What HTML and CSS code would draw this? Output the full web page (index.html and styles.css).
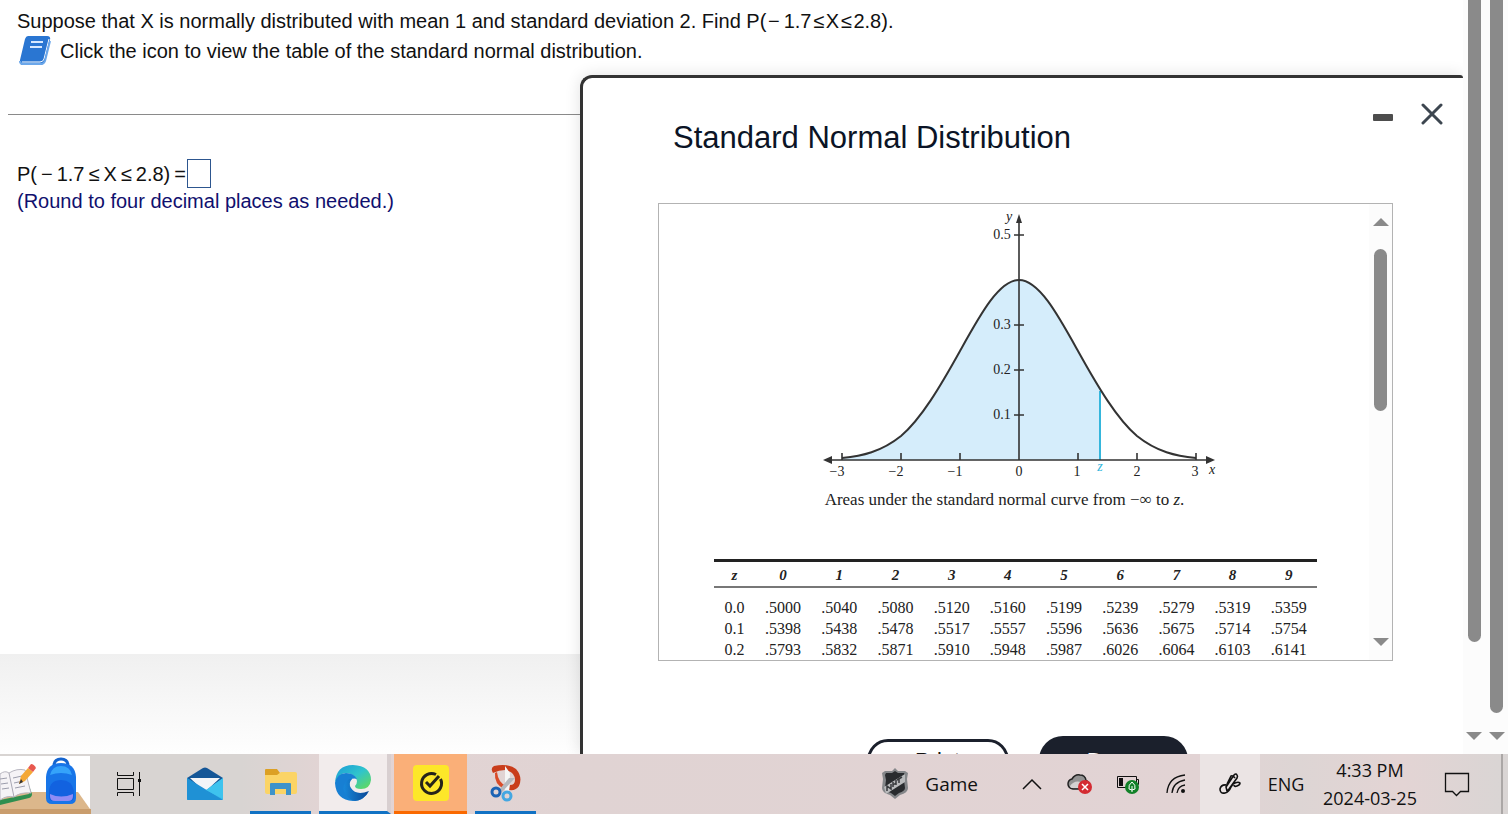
FILE: index.html
```html
<!DOCTYPE html>
<html lang="en">
<head>
    <meta charset="UTF-8">
    <meta name="viewport" content="width=device-width, initial-scale=1.0">
    <title>Standard Normal Distribution</title>
    <link rel="stylesheet" href="styles.css">
</head>
<body>
    <div class="screen">
        <main class="page">
            <section class="question">
                <p>Suppose that X is normally distributed with mean 1 and standard deviation 2. Find P(&hairsp;&minus;&thinsp;1.7&hairsp;≤&hairsp;X&hairsp;≤&hairsp;2.8).</p>
                <a class="table-link" href="#table">
                    <svg width="32" height="32" viewBox="0 0 32 32">
                        <path d="M9 1h19q4 0 3 4l-5 21q-1 4-5 4H4q-4 0-3-5L6 4q1-3 3-3z" fill="#2a76d2"/>
                        <path d="M30 4l-5 20q-1 3-4 3H3" fill="none" stroke="#fff" stroke-width="1"/>
                        <path d="M31 6l-5 20q-1 3-4 3H4q-3 0-3-3" fill="none" stroke="#6ba7ea" stroke-width="2"/>
                        <path d="M12 7h12M11 12h12" stroke="#d7e9ff" stroke-width="2"/>
                    </svg>
                    <span>Click the icon to view the table of the standard normal distribution.</span>
                </a>
            </section>
            <section class="answer">
                <div class="equation">
                    <label for="answer">P(&thinsp;&minus;&thinsp;1.7&thinsp;≤&thinsp;X&thinsp;≤&thinsp;2.8)&thinsp;=</label>
                    <input type="text" id="answer">
                </div>
                <p class="hint">(Round to four decimal places as needed.)</p>
            </section>
            <div class="page-footer"></div>

            <div class="dialog" id="table">
                <header class="dialog-header">
                    <h1>Standard Normal Distribution</h1>
                    <div class="window-buttons">
                        <button class="minimize" aria-label="Minimize"></button>
                        <button class="close" aria-label="Close">
                            <svg width="22" height="22" viewBox="0 0 22 22"><path d="M2 2l18 18M20 2L2 20" stroke="#3d4650" stroke-width="3" stroke-linecap="round"/></svg>
                        </button>
                    </div>
                </header>
                <div class="viewer">
                    <div class="viewer-content">
                        <svg class="chart" width="400" height="274" viewBox="-199 -250 400 274">
                            <clipPath id="area"><rect x="-180" y="-200" width="261" height="200"/></clipPath>
                            <path clip-path="url(#area)" fill="#d5edfb" d="M-177 0V-2C-157-4-138-8-118-24C-98-41-79-73-59-109C-39-145-20-180 0-180C20-180 39-145 59-109C79-73 98-41 118-24C138-8 157-4 177-2V0z"/>
                            <path d="M81 0V-69" stroke="#35b6dc" stroke-width="2"/>
                            <g fill="none" stroke="#333" stroke-width="1.6">
                                <path stroke-width="2" d="M-177-2C-157-4-138-8-118-24C-98-41-79-73-59-109C-39-145-20-180 0-180C20-180 39-145 59-109C79-73 98-41 118-24C138-8 157-4 177-2"/>
                                <path d="M-190 0H190M0 0V-242"/>
                                <path d="M-177 0v-7M-118 0v-7M-59 0v-7M59 0v-7M118 0v-7M177 0v-7"/>
                                <path d="M-5-45H5M-5-90H5M-5-135H5M-5-225H5"/>
                            </g>
                            <path fill="#333" d="M-196 0l9-4v8zM196 0l-9-4v8zM0-246l-3 9h6z"/>
                            <g class="labels">
                                <text x="-10" y="-239" font-style="italic">y</text>
                                <text x="-17" y="-221">0.5</text>
                                <text x="-17" y="-131">0.3</text>
                                <text x="-17" y="-86">0.2</text>
                                <text x="-17" y="-41">0.1</text>
                                <text x="-182" y="16">−3</text>
                                <text x="-123" y="16">−2</text>
                                <text x="-64" y="16">−1</text>
                                <text x="0" y="16">0</text>
                                <text x="58" y="16">1</text>
                                <text class="z" x="81" y="11">z</text>
                                <text x="118" y="16">2</text>
                                <text x="176" y="16">3</text>
                                <text x="193" y="14" font-style="italic">x</text>
                            </g>
                        </svg>
                        <p class="caption">Areas under the standard normal curve from −∞ to <i>z</i>.</p>
                        <table>
                            <thead>
                                <tr><th class="z-col">z</th><th>0</th><th>1</th><th>2</th><th>3</th><th>4</th><th>5</th><th>6</th><th>7</th><th>8</th><th>9</th></tr>
                            </thead>
                            <tbody>
                                <tr><td>0.0</td><td>.5000</td><td>.5040</td><td>.5080</td><td>.5120</td><td>.5160</td><td>.5199</td><td>.5239</td><td>.5279</td><td>.5319</td><td>.5359</td></tr>
                                <tr><td>0.1</td><td>.5398</td><td>.5438</td><td>.5478</td><td>.5517</td><td>.5557</td><td>.5596</td><td>.5636</td><td>.5675</td><td>.5714</td><td>.5754</td></tr>
                                <tr><td>0.2</td><td>.5793</td><td>.5832</td><td>.5871</td><td>.5910</td><td>.5948</td><td>.5987</td><td>.6026</td><td>.6064</td><td>.6103</td><td>.6141</td></tr>
                            </tbody>
                        </table>
                    </div>
                    <div class="scrollbar viewer-scroll">
                        <span class="arrow up"></span>
                        <span class="thumb"></span>
                        <span class="arrow"></span>
                    </div>
                </div>
                <div class="dialog-buttons">
                    <button class="print">Print</button>
                    <button class="done">Done</button>
                </div>
            </div>
        </main>
        <div class="scrollbar scroll-inner"><span class="thumb"></span><span class="arrow"></span></div>
        <div class="scrollbar scroll-outer"><span class="thumb"></span><span class="arrow"></span></div>
    </div>

    <footer class="taskbar">
        <button class="widget" aria-label="Search highlights">
            <svg width="91" height="60" viewBox="0 0 91 60">
                <rect width="91" height="60" fill="#d8d4d2"/>
                <rect y="2" width="90" height="58" fill="#fff"/>
                <path d="M0 38h78l12 17v5H0z" fill="#dcb78b"/>
                <path d="M0 55h91v5H0z" fill="#c99d6d"/>
                <path d="M0 46l29-6-2-14 5 14q0 3-3 4L0 51z" fill="#2f8f50"/>
                <path d="M0 20q5-4 9-1 8-5 16-3l6 23q-11-1-17 4-7-2-14 3z" fill="#f5f3f6" stroke="#b8b6c0"/>
                <path d="M9 19l5 24" stroke="#a9a8b4"/>
                <path d="M0 25l7-1M1 30l7-1M2 35l7-1M13 24l9-2M14 29l9-2M15 34l10-2" stroke="#9c9dac"/>
                <path d="M19 30l2-8 7-8 5 4-8 9z" fill="#f4a837"/>
                <path d="M28 14l3-4q3 0 5 4l-3 4z" fill="#e8584f"/>
                <path d="M19 30l2-5 2 3z" fill="#333"/>
                <path d="M54 12q0-7 7-7t7 7" fill="none" stroke="#1464cf" stroke-width="3"/>
                <path d="M46 23q1-14 15-14t15 14v21q0 6-6 6H52q-6 0-6-6z" fill="#1875e8"/>
                <path d="M50 21q2-9 11-9t11 9q-11-4-22 0z" fill="#35a3fa"/>
                <path d="M49 37q1-11 12-11t13 11v6q0 4-4 4H53q-4 0-4-4z" fill="#1262e0"/>
                <path d="M50 40q11 5 23 0v2q0 5-5 5H55q-5 0-5-5z" fill="#8f8cf5"/>
            </svg>
        </button>
        <button class="task-view" aria-label="Task view">
            <svg width="26" height="26" viewBox="0 0 26 26" fill="none" stroke="#111">
                <path d="M1.500 1v3.500h16V1M1.500 7.500h16v11h-16zM1.500 25v-3.500h16V25M23.500 1v24"/>
                <rect x="22" y="8" width="3" height="3" fill="#111" stroke="none"/>
            </svg>
        </button>
        <button class="mail" aria-label="Mail">
            <svg width="38" height="34" viewBox="0 0 38 34">
                <path d="M1 11L17 1q2-1 4 0l16 10v12H1z" fill="#145697"/>
                <path d="M4 11h30L19 25z" fill="#f3f5f8"/>
                <path d="M1 11l18 13 18-13v21q0 1-1 1H2q-1 0-1-1z" fill="#36b4e8"/>
                <path d="M1 11l36 22H2q-1 0-1-1z" fill="#1f91d5"/>
                <path d="M37 11v21L20 23z" fill="#3ec3ee"/>
            </svg>
        </button>
        <button class="folder running" aria-label="File Explorer">
            <svg width="34" height="30" viewBox="0 0 34 30">
                <path d="M1 2q0-1 1-1h11l3 4v5H1z" fill="#dca024"/>
                <path d="M1 7h12l4-3h14q2 0 2 2v18q0 2-2 2H3q-2 0-2-2z" fill="#fbd466"/>
                <path d="M6 27V16q0-1 1-1h19q1 0 1 1v11h-5v-6H11v6z" fill="#3e93ca"/>
            </svg>
        </button>
        <button class="edge running" aria-label="Microsoft Edge">
            <svg width="38" height="38" viewBox="0 0 38 38">
                <defs>
                    <linearGradient id="edge-top" x1="0" x2="1" y1="0" y2="1"><stop offset="0" stop-color="#1a9bd8"/><stop offset=".5" stop-color="#30c4cc"/><stop offset="1" stop-color="#67dc51"/></linearGradient>
                    <linearGradient id="edge-low" x1="0" x2="1"><stop offset="0" stop-color="#1787d9"/><stop offset="1" stop-color="#0b4795"/></linearGradient>
                </defs>
                <path d="M1 19Q2 1 19 1q18 1 18 15-1 9-10 9-6 0-6-3 2-2 2-5Q21 9 11 9 4 10 1 19z" fill="url(#edge-top)"/>
                <path d="M1 19Q3 9 12 9q8 0 11 6-7-2-8 5 0 12 13 11 5-1 7-4-5 10-16 10Q2 36 1 19z" fill="#177fd3"/>
                <path d="M15 15q-7 5-5 12 3 8 11 10 9-1 14-10-13 5-18-3-3-5 1-9z" fill="url(#edge-low)"/>
            </svg>
        </button>
        <button class="norton" aria-label="Norton">
            <svg width="36" height="36" viewBox="0 0 36 36">
                <rect width="36" height="36" rx="4" fill="#fde729"/>
                <path d="M27.500 14A10 10 0 1 1 23 9.500" fill="none" stroke="#25231a" stroke-width="3"/>
                <path d="M13 17l4 4 9-10" fill="none" stroke="#25231a" stroke-width="3"/>
            </svg>
        </button>
        <button class="snip running" aria-label="Snipping Tool">
            <svg width="32" height="38" viewBox="0 0 32 38">
                <path d="M3 9Q0 4 4 2q14-3 22 3 7 8 3 17-3 5-10 4l1-5q5 0 5-5 0-8-10-10-6 0-12 3z" fill="#c93d1b"/>
                <path d="M5 9q-1 11 9 16l2-3Q8 18 7 8z" fill="#d94b28"/>
                <path d="M15 2l5 7-1 19-4-2z" fill="#f5f5f5"/>
                <path d="M25 14L12 28l-3-2 10-12z" fill="#b5b8bd"/>
                <circle cx="6" cy="28" r="4" fill="none" stroke="#1c63b4" stroke-width="3"/>
                <circle cx="17" cy="32" r="4" fill="none" stroke="#43a7e2" stroke-width="3"/>
            </svg>
        </button>

        <div class="tray">
            <button class="game">
                <svg width="28" height="32" viewBox="0 0 28 32">
                    <path d="M14 0l3 3h7l3 2-1 6 1 9q0 5-8 7l-5 4-5-4q-8-2-8-7l1-9-1-6 3-2h7z" fill="#85878a"/>
                    <path d="M14 3l3 2h6l1 2-1 5 1 8q0 3-6 5l-4 3-4-3q-6-2-6-5l1-8-1-5 1-2h6z" fill="#292b2e"/>
                    <path d="M3 19L24 6v8L5 26z" fill="#b9babc"/>
                    <path d="M6 23v-5l4 3v-5M12 19v-5M15 17v-5M12 17l3-2M18 15v-5M16 12l5-3" stroke="#37393c" stroke-width="1.500" fill="none"/>
                </svg>
                <span>Game</span>
            </button>
            <button class="tray-icon" aria-label="Show hidden icons">
                <svg width="20" height="12" viewBox="0 0 20 12"><path d="M1 11l9-9 9 9" fill="none" stroke="#111" stroke-width="1.500"/></svg>
            </button>
            <button class="tray-icon" aria-label="OneDrive">
                <svg width="26" height="22" viewBox="0 0 26 22">
                    <path d="M6 16q-5-1-5-5 0-4 4-5Q8 1 13 2q5 0 6 5 3 2 3 5 0 4-5 4z" fill="#929292" stroke="#222" stroke-width="1.500"/>
                    <path d="M3 13q4-6 11-4v6H6q-3 0-3-2z" fill="#d4d1d1"/>
                    <circle cx="18" cy="14" r="7" fill="#d42b32"/>
                    <path d="M15 11l6 6M21 11l-6 6" stroke="#fff" stroke-width="1.500"/>
                </svg>
            </button>
            <button class="tray-icon" aria-label="Battery">
                <svg width="26" height="20" viewBox="0 0 26 20">
                    <path d="M2.500 2.500h19v11h-19zM22 5.500h1.500v5H22" fill="none" stroke="#111"/>
                    <path d="M4 4h4v8H4z" fill="#111"/>
                    <circle cx="17" cy="13" r="7" fill="#128128"/>
                    <path d="M17 8q-4 3-3 7l3 1 3-1q1-4-3-7zM17 12v6" fill="none" stroke="#fff"/>
                </svg>
            </button>
            <button class="tray-icon" aria-label="Network">
                <svg width="20" height="20" viewBox="0 0 20 20" fill="none" stroke="#111" stroke-width="1.300">
                    <path d="M1 19Q2 3 19 1M6 19Q7 8 19 6M11 19q1-7 8-8"/>
                    <circle cx="17" cy="17" r="2" fill="#111" stroke="none"/>
                </svg>
            </button>
            <button class="pen" aria-label="Pen menu">
                <svg width="22" height="22" viewBox="0 0 22 22" fill="none" stroke="#111" stroke-width="1.600">
                    <path d="M8 18l-1-4L15 2q2-2 3 0 1 1 0 3L10 16zM16 5q-2-3-4-2L8 11M8 12q-6-1-7 4 0 5 5 4 4-1 6-6l2-3M14 11q5-3 7-1 0 2-3 3-3 1-3-1"/>
                </svg>
            </button>
            <button class="language">ENG</button>
            <button class="clock"><span>4:33 PM</span><span>2024-03-25</span></button>
            <button class="notifications" aria-label="Notifications">
                <svg width="26" height="26" viewBox="0 0 26 26"><path d="M1.500 2.500h23v18h-8l-4 4-4-4h-7z" fill="none" stroke="#111" stroke-width="1.300"/></svg>
            </button>
            <div class="show-desktop"></div>
        </div>
    </footer>
</body>
</html>
```
FILE: styles.css
```css
* {
    box-sizing: border-box;
}
body {
    margin: 0;
    height: 100vh;
    display: flex;
    flex-direction: column;
    overflow: hidden;
    font-family: "Liberation Sans", Arial, sans-serif;
    font-size: 20px;
    color: #111;
    background-color: white;
}
p, h1 {
    margin: 0;
}
button {
    border: none;
    padding: 0;
    background: none;
    color: inherit;
    font: inherit;
    cursor: pointer;
}
svg {
    display: block;
    flex: none;
}
.screen {
    flex: 1;
    min-height: 0;
    display: flex;
}

/* question page */
.page {
    flex: 1;
    min-width: 0;
    position: relative;
    overflow: hidden;
    display: flex;
    flex-direction: column;
}
.question {
    height: 115px;
    margin-left: 8px;
    padding: 6px 9px;
    border-bottom: 1px solid #8a8a8a;
    line-height: 30px;
    white-space: nowrap;
}
.table-link {
    display: flex;
    align-items: center;
    gap: 9px;
    height: 30px;
    padding-left: 2px;
    color: inherit;
    text-decoration: none;
}
.answer {
    padding: 44px 17px;
    line-height: 26px;
}
.equation {
    display: flex;
    align-items: center;
    gap: 1px;
}
.answer input {
    width: 24px;
    height: 29px;
    margin: 0;
    padding: 0 2px;
    border: 1px solid #2d568f;
    font: inherit;
}
.hint {
    color: #10106e;
}
.page-footer {
    height: 100px;
    margin-top: auto;
    background: linear-gradient(#f0f0f0, #fefefe);
}

/* dialog over the page */
.dialog {
    position: absolute;
    top: 75px;
    left: 580px;
    right: 0;
    bottom: 0;
    overflow: hidden;
    border: 3px solid #333;
    border-right: none;
    border-bottom: none;
    border-radius: 12px 3px 0 0;
    background-color: white;
    box-shadow: 0 0 16px rgba(0, 0, 0, 0.12);
}
.dialog-header {
    display: flex;
    justify-content: space-between;
    height: 125px;
    padding: 24px 20px 0 90px;
}
.dialog-header h1 {
    padding-top: 16px;
    font-size: 31px;
    font-weight: normal;
    line-height: 40px;
    color: #0b1426;
}
.window-buttons {
    display: flex;
    align-items: center;
    gap: 28px;
    height: 24px;
}
.minimize {
    width: 20px;
    height: 7px;
    margin-top: 6px;
    border-radius: 1px;
    background-color: #4d4d4d;
}
.viewer {
    display: flex;
    height: 458px;
    margin: 0 70px 0 75px;
    border: 1px solid #b3b3b3;
}
.viewer-content {
    flex: 1;
    display: flex;
    flex-direction: column;
    align-items: center;
    padding: 6px 0 0 3px;
    overflow: hidden;
    font-family: "Liberation Serif", "Times New Roman", serif;
    font-size: 16px;
    color: #222;
}
.chart {
    margin-left: 9px;
}
.labels {
    font-size: 14px;
    text-anchor: middle;
    fill: #222;
}
.labels .z {
    fill: #35b6dc;
    font-style: italic;
}
.caption {
    margin-right: 22px;
    padding-top: 6px;
    font-size: 17px;
    line-height: 20px;
    white-space: nowrap;
}
table {
    width: 603px;
    margin-top: 49px;
    border-collapse: collapse;
    table-layout: fixed;
    text-align: center;
}
thead {
    border-top: 3px solid #222;
    border-bottom: 2px solid #777;
}
th {
    height: 26px;
    padding: 2px 0 0;
    font-size: 15px;
    font-style: italic;
    line-height: 20px;
}
td {
    height: 21px;
    padding: 0;
    line-height: 21px;
}
tbody tr:first-child td {
    padding-top: 9px;
}
.z-col {
    width: 41px;
}
.dialog-buttons {
    display: flex;
    justify-content: center;
    align-items: center;
    gap: 30px;
    margin-top: 75px;
    padding-left: 8px;
    font-size: 22px;
}
.print {
    width: 142px;
    height: 42px;
    border: 3px solid #1b202c;
    border-radius: 24px;
}
.done {
    width: 149px;
    height: 48px;
    border-radius: 24px;
    background-color: #1b202c;
    color: white;
}
.print, .done {
    padding-top: 1px;
}

/* scroll bars */
.scrollbar {
    flex: none;
    width: 22px;
    display: flex;
    flex-direction: column;
    align-items: center;
    justify-content: space-between;
    padding-bottom: 14px;
    background-color: #fcfcfc;
}
.thumb {
    width: 13px;
    border-radius: 0 0 7px 7px;
    background-color: #8a8a8a;
}
.arrow {
    border: 8px solid transparent;
    border-top-color: #8a8a8a;
    border-bottom: none;
}
.arrow.up {
    border-top: none;
    border-bottom: 8px solid #8a8a8a;
}
.scroll-inner .thumb {
    height: 642px;
}
.scroll-outer {
    width: 23px;
}
.scroll-outer .thumb {
    height: 713px;
}
.viewer-scroll {
    width: 23px;
    padding-top: 14px;
}
.viewer-scroll .thumb {
    height: 162px;
    margin: 23px 0 auto;
    border-radius: 7px;
}

/* taskbar */
.taskbar {
    display: flex;
    height: 60px;
    background: linear-gradient(90deg, #d8d4d2 0, #d8d4d2 16%, #e3d4d4 22%, #e0d3d3 38%, #e2d3d4 80%, #ddd5d4 86%, #e3d4d4 93%, #d9d5d4);
    font-family: "Open Sans", "Noto Sans", sans-serif;
    font-size: 18px;
}
.taskbar button {
    display: flex;
    align-items: center;
    justify-content: center;
    flex: none;
}
.task-view {
    width: 75px;
}
.mail {
    width: 78px;
}
.taskbar .running {
    width: 61px;
    border-bottom: 3px solid #1172c4;
}
.folder {
    margin-left: 6px;
}
.taskbar .edge {
    width: 72px;
    margin-left: 8px;
    background-color: #f2ecec;
    border-right: 4px solid #d8cfd0;
}
.norton {
    width: 73px;
    margin-left: 3px;
    background-color: #faaf78;
    border-bottom: 3px solid #fa6900;
}
.snip {
    margin-left: 8px;
}
.tray {
    display: flex;
    margin-left: auto;
}
.game {
    gap: 16px;
    padding-right: 30px;
    font-size: 19px;
}
.tray-icon {
    width: 48px;
}
.pen {
    width: 60px;
    background-color: #ebe4e4;
}
.language {
    width: 52px;
}
.clock {
    width: 116px;
    flex-direction: column;
    line-height: 28px;
}
.notifications {
    width: 58px;
}
.show-desktop {
    width: 7px;
    margin-left: 15px;
    border-left: 2px solid #aba7a6;
}
```
